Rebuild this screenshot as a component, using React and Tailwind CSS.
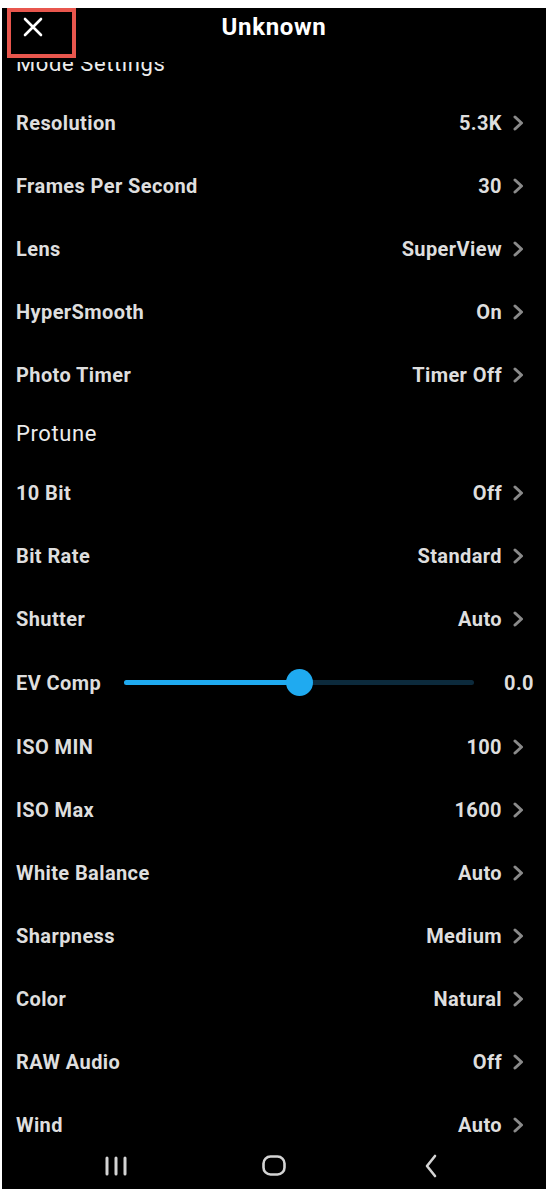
import { useState } from "react";

const modeRows = [
  { label: "Resolution", value: "5.3K" },
  { label: "Frames Per Second", value: "30" },
  { label: "Lens", value: "SuperView" },
  { label: "HyperSmooth", value: "On" },
  { label: "Photo Timer", value: "Timer Off" },
];

const protuneTop = [
  { label: "10 Bit", value: "Off" },
  { label: "Bit Rate", value: "Standard" },
  { label: "Shutter", value: "Auto" },
];

const protuneBottom = [
  { label: "ISO MIN", value: "100" },
  { label: "ISO Max", value: "1600" },
  { label: "White Balance", value: "Auto" },
  { label: "Sharpness", value: "Medium" },
  { label: "Color", value: "Natural" },
  { label: "RAW Audio", value: "Off" },
  { label: "Wind", value: "Auto" },
];

const Chevron = () => (
  <svg width="12" height="16" viewBox="0 0 12 16" className="shrink-0">
    <polyline
      points="3,2 9.5,8 3,14"
      fill="none"
      stroke="#8a8a8a"
      strokeWidth="3"
      strokeLinecap="round"
      strokeLinejoin="round"
    />
  </svg>
);

const SettingRow = ({ label, value }) => (
  <div className="h-[63px] flex items-center justify-between pl-[14px] pr-[22px]">
    <span className="text-[20px] font-bold tracking-[0.4px] text-[#dedede]">
      {label}
    </span>
    <div className="flex items-center gap-[10px]">
      <span className="text-[20px] font-bold tracking-[0.4px] text-[#dedede]">
        {value}
      </span>
      <Chevron />
    </div>
  </div>
);

const SectionTitle = ({ children }) => (
  <div className="h-[55px] flex items-center pl-[14px]">
    <span className="text-[22px] tracking-[0.6px] text-[#ececec]">
      {children}
    </span>
  </div>
);

const EvSlider = () => {
  const [ev] = useState(0.5); // position on the track, 0..1

  return (
    <div className="h-[65px] flex items-center pl-[14px] pr-[12px]">
      <span className="w-[108px] shrink-0 text-[20px] font-bold tracking-[0.4px] text-[#dedede]">
        EV Comp
      </span>
      <div className="relative w-[350px] h-[5px] rounded-full bg-[#0c2a3c]">
        <div
          className="h-[5px] rounded-full bg-[#1faaf0]"
          style={{ width: `${ev * 100}%` }}
        ></div>
        <div
          className="absolute top-1/2 w-[27px] h-[27px] -mt-[13.5px] -ml-[13.5px] rounded-full bg-[#1faaf0]"
          style={{ left: `${ev * 100}%` }}
        ></div>
      </div>
      <span className="flex-1 text-right text-[20px] font-bold tracking-[0.4px] text-[#dedede]">
        0.0
      </span>
    </div>
  );
};

export default function App() {
  return (
    <div className="bg-white w-[546px] h-[1189px] pt-[8px] pl-[2px] font-['Roboto',sans-serif]">
      <div className="relative bg-black h-[1181px] flex flex-col overflow-hidden">
        {/* Header */}
        <div className="h-[54px] shrink-0">
          <div className="h-[38px] flex items-center justify-center relative">
            <svg
              width="20"
              height="20"
              viewBox="0 0 20 20"
              className="absolute left-[21px] top-[9px]"
            >
              <path
                d="M2 2 L18 18 M18 2 L2 18"
                stroke="white"
                strokeWidth="2.6"
                strokeLinecap="round"
              />
            </svg>
            <span className="text-[24px] font-bold tracking-[0.7px] text-white">
              Unknown
            </span>
          </div>
        </div>

        {/* red highlight round the close button */}
        <div className="absolute left-[5px] top-0 w-[69px] h-[50px] border-4 border-[#e8564d]"></div>

        {/* Scrolling settings list */}
        <div className="flex-1 overflow-hidden">
          <div className="-mt-[26px]">
            <SectionTitle>Mode Settings</SectionTitle>
            {modeRows.map((row) => (
              <SettingRow key={row.label} {...row} />
            ))}
            <SectionTitle>Protune</SectionTitle>
            {protuneTop.map((row) => (
              <SettingRow key={row.label} {...row} />
            ))}
            <EvSlider />
            {protuneBottom.map((row) => (
              <SettingRow key={row.label} {...row} />
            ))}
          </div>
        </div>

        {/* Android nav bar */}
        <div className="h-[46px] shrink-0 flex items-center justify-center gap-[134px] bg-black">
          <svg width="24" height="22" viewBox="0 0 24 22">
            <g stroke="#d4d4d4" strokeWidth="3" strokeLinecap="round">
              <line x1="3" y1="3" x2="3" y2="19" />
              <line x1="12" y1="3" x2="12" y2="19" />
              <line x1="21" y1="3" x2="21" y2="19" />
            </g>
          </svg>
          <svg width="24" height="22" viewBox="0 0 24 22">
            <rect
              x="1.5"
              y="1.5"
              width="21"
              height="18"
              rx="7"
              fill="none"
              stroke="#d4d4d4"
              strokeWidth="2.6"
            />
          </svg>
          <svg width="24" height="24" viewBox="0 0 24 24">
            <polyline
              points="15,2 7,12 15,22"
              fill="none"
              stroke="#d4d4d4"
              strokeWidth="2.6"
              strokeLinecap="round"
              strokeLinejoin="round"
            />
          </svg>
        </div>
      </div>
    </div>
  );
}
